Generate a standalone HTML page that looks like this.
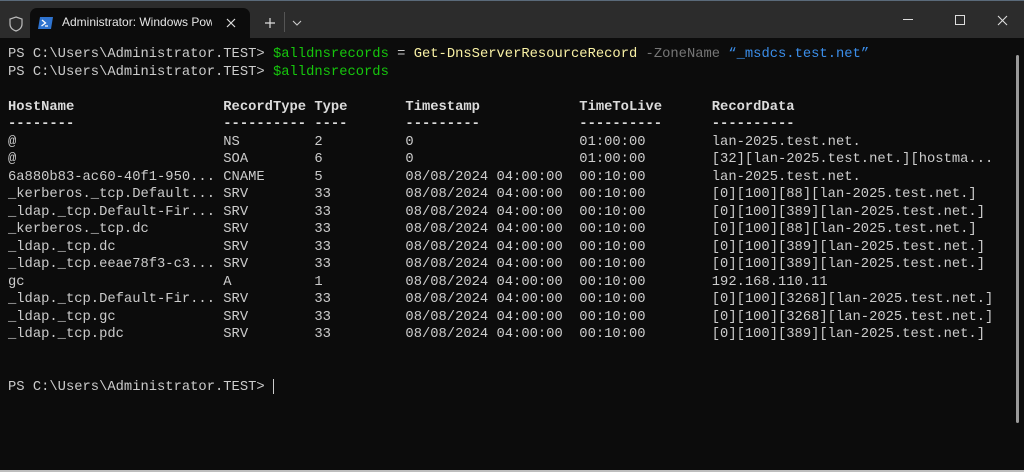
<!DOCTYPE html>
<html><head><meta charset="utf-8"><style>
html,body{margin:0;padding:0;width:1024px;height:472px;overflow:hidden;background:#0c0c0c;}
#tb{position:absolute;left:0;top:0;width:1024px;height:38px;background:#2c2c2c;}
#tab{position:absolute;left:30px;top:8px;width:220px;height:30px;background:#0c0c0c;border-radius:7px 7px 0 0;}
.t{position:absolute;font-family:"Segoe UI","Liberation Sans",sans-serif;color:#e6e6e6;font-size:12px;}
pre{position:absolute;left:8px;top:46px;margin:0;font-family:"Liberation Mono","DejaVu Sans Mono",monospace;font-size:13.8px;line-height:17.5px;color:#cccccc;}
.g{color:#16c60c}.y{color:#f9f1a5}.d{color:#767676}.b{color:#3b8eea}.h{color:#dcdcdc;font-weight:bold}
</style></head><body>
<div id="tb"></div>
<div style="position:absolute;left:0;top:0;width:1024px;height:1px;background:#5a6a7a"></div>
<svg style="position:absolute;left:9px;top:16px" width="14" height="16" viewBox="0 0 14 16"><path d="M7 1 L13 3 V8 C13 12 10 14 7 15 C4 14 1 12 1 8 V3 Z" fill="none" stroke="#bbb" stroke-width="1.2"/></svg>
<div id="tab"></div>
<svg style="position:absolute;left:38px;top:17px" width="15" height="12" viewBox="0 0 15 12"><path d="M2 0 H15 L13 12 H0 Z" fill="#2f74d0"/><path d="M4 3 L7.5 6 L3.5 9" stroke="#fff" stroke-width="1.3" fill="none"/><path d="M7 9 H10" stroke="#fff" stroke-width="1.2"/></svg>
<div class="t" style="left:62px;top:15px;width:150px;overflow:hidden;white-space:nowrap">Administrator: Windows PowerShell</div>
<svg style="position:absolute;left:226px;top:18px" width="10" height="10"><path d="M1 1 L9 9 M9 1 L1 9" stroke="#ddd" stroke-width="1.2"/></svg>
<svg style="position:absolute;left:264px;top:17px" width="12" height="12"><path d="M6 1 V11 M1 6 H11" stroke="#ddd" stroke-width="1.2"/></svg>
<div style="position:absolute;left:284px;top:12px;width:1px;height:20px;background:#555"></div>
<svg style="position:absolute;left:292px;top:20px" width="10" height="6"><path d="M1 1 L5 5 L9 1" stroke="#ccc" stroke-width="1.1" fill="none"/></svg>
<div style="position:absolute;left:903px;top:19px;width:10px;height:1px;background:#ddd"></div>
<div style="position:absolute;left:955px;top:15px;width:8px;height:8px;border:1px solid #ddd"></div>
<svg style="position:absolute;left:997px;top:15px" width="11" height="11"><path d="M1 1 L10 10 M10 1 L1 10" stroke="#ddd" stroke-width="1.1"/></svg>
<div style="position:absolute;left:1016px;top:55px;width:3px;height:368px;background:#9a9a9a;border-radius:2px"></div>
<div style="position:absolute;left:0;top:470px;width:1024px;height:2px;background:#bdbdbd"></div>
<pre>PS C:\Users\Administrator.TEST&gt; <span class="g">$alldnsrecords</span> = <span class="y">Get-DnsServerResourceRecord</span> <span class="d">-ZoneName</span> <span class="b">“_msdcs.test.net”</span>
PS C:\Users\Administrator.TEST&gt; <span class="g">$alldnsrecords</span>

<span class="h">HostName                  RecordType Type       Timestamp            TimeToLive      RecordData</span>
<span class="h">--------                  ---------- ----       ---------            ----------      ----------</span>
@                         NS         2          0                    01:00:00        lan-2025.test.net.
@                         SOA        6          0                    01:00:00        [32][lan-2025.test.net.][hostma...
6a880b83-ac60-40f1-950... CNAME      5          08/08/2024 04:00:00  00:10:00        lan-2025.test.net.
_kerberos._tcp.Default... SRV        33         08/08/2024 04:00:00  00:10:00        [0][100][88][lan-2025.test.net.]
_ldap._tcp.Default-Fir... SRV        33         08/08/2024 04:00:00  00:10:00        [0][100][389][lan-2025.test.net.]
_kerberos._tcp.dc         SRV        33         08/08/2024 04:00:00  00:10:00        [0][100][88][lan-2025.test.net.]
_ldap._tcp.dc             SRV        33         08/08/2024 04:00:00  00:10:00        [0][100][389][lan-2025.test.net.]
_ldap._tcp.eeae78f3-c3... SRV        33         08/08/2024 04:00:00  00:10:00        [0][100][389][lan-2025.test.net.]
gc                        A          1          08/08/2024 04:00:00  00:10:00        192.168.110.11
_ldap._tcp.Default-Fir... SRV        33         08/08/2024 04:00:00  00:10:00        [0][100][3268][lan-2025.test.net.]
_ldap._tcp.gc             SRV        33         08/08/2024 04:00:00  00:10:00        [0][100][3268][lan-2025.test.net.]
_ldap._tcp.pdc            SRV        33         08/08/2024 04:00:00  00:10:00        [0][100][389][lan-2025.test.net.]


PS C:\Users\Administrator.TEST&gt; <span style="display:inline-block;width:1px;height:15px;background:#ccc;vertical-align:middle"></span></pre>
</body></html>
